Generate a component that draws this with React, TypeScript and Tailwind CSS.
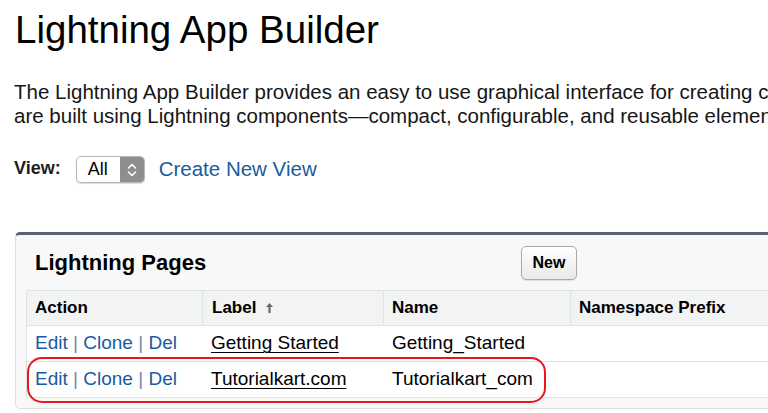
import React from "react";

function SortArrow() {
  return (
    <svg width="9" height="12" viewBox="0 0 9 12" className="ml-[9px]">
      <path d="M4.5 1 L8 5 L5.6 5 L5.6 11 L3.4 11 L3.4 5 L1 5 Z" fill="#6b6b6b" />
    </svg>
  );
}

function Chevrons() {
  return (
    <svg width="12" height="18" viewBox="0 0 12 18">
      <path d="M2.5 7 L6 3.5 L9.5 7" fill="none" stroke="#ffffff" strokeWidth="1.6" strokeLinecap="round" strokeLinejoin="round" />
      <path d="M2.5 11 L6 14.5 L9.5 11" fill="none" stroke="#ffffff" strokeWidth="1.6" strokeLinecap="round" strokeLinejoin="round" />
    </svg>
  );
}

function Actions() {
  return (
    <span className="text-[#1a5b9e] whitespace-nowrap">
      <span>Edit</span>
      <span className="text-[#6a88b0]"> | </span>
      <span>Clone</span>
      <span className="text-[#6a88b0]"> | </span>
      <span>Del</span>
    </span>
  );
}

const rows = [
  { label: "Getting Started", name: "Getting_Started" },
  { label: "Tutorialkart.com", name: "Tutorialkart_com" },
];

export default function App() {
  return (
    <div className="relative w-[768px] h-[413px] overflow-hidden bg-white text-black font-['Liberation_Sans','Helvetica',Arial,sans-serif]">
      <h1 className="pt-[8px] pl-[15px] text-[38.5px] leading-[44px] font-normal whitespace-nowrap">
        Lightning App Builder
      </h1>

      <div className="mt-[28px] pl-[14px] text-[20.5px] leading-[24px] whitespace-nowrap text-[#161616]">
        <div>
          The Lightning App Builder provides an easy to use graphical interface for creating custom pages for the Salesforce mobile app. Lightning pages
        </div>
        <div>
          are built using Lightning components—compact, configurable, and reusable elements that you can drag and drop
        </div>
      </div>

      <div className="mt-[28px] pl-[14px] flex items-center h-[27px]">
        <span className="text-[18px] font-bold text-[#1e1e1e] -mt-[2px]">View:</span>
        <div className="ml-[15px] flex h-[27px] w-[69px] rounded-[5px] border border-[#b9b9b9] shadow-[0_1px_1px_rgba(0,0,0,0.15)] overflow-hidden bg-white">
          <div className="flex-1 flex items-center pl-[11px] text-[18px]">All</div>
          <div className="w-[24px] bg-[#8e8e8e] flex items-center justify-center">
            <Chevrons />
          </div>
        </div>
        <span className="ml-[14px] text-[20.5px] text-[#1a5b9e] -mt-[1px]">Create New View</span>
      </div>

      <div className="mt-[49px] ml-[15px] w-[820px] rounded-[5px] border border-[#dedede] border-t-[3px] border-t-[#5b6272] bg-[#f8f8f8] pl-[10px] pb-[10px]">
        <div className="flex items-center h-[55px]">
          <div className="w-[495px] pl-[9px] text-[22px] font-bold">Lightning Pages</div>
          <div className="w-[56px] h-[34px] rounded-[5px] border border-[#a9a9a9] bg-gradient-to-b from-white to-[#e9e9e9] flex items-center justify-center text-[16px] font-bold shadow-[0_1px_1px_rgba(0,0,0,0.1)]">
            New
          </div>
        </div>

        <div className="border border-[#e0e3e5] border-b-0">
          <div className="grid grid-cols-[176px_181px_187px_300px] h-[35px] bg-[#f2f3f3] text-[17px] font-bold border-b border-[#e0e3e5]">
            <div className="flex items-center pl-[8px] border-r border-[#e0e3e5]">Action</div>
            <div className="flex items-center pl-[9px] border-r border-[#e0e3e5]">
              Label
              <SortArrow />
            </div>
            <div className="flex items-center pl-[8px] border-r border-[#e0e3e5]">Name</div>
            <div className="flex items-center pl-[8px]">Namespace Prefix</div>
          </div>
          {rows.map((r) => (
            <div
              key={r.name}
              className="grid grid-cols-[176px_181px_187px_300px] h-[36px] bg-white text-[19px] border-b border-[#e0e3e5]"
            >
              <div className="flex items-center pl-[8px]">
                <Actions />
              </div>
              <div className="flex items-center pl-[8px]">
                <span className="underline underline-offset-[3px] decoration-[1px]">{r.label}</span>
              </div>
              <div className="flex items-center pl-[8px]">{r.name}</div>
              <div />
            </div>
          ))}
        </div>
      </div>

      <div className="absolute left-[27px] top-[357px] w-[519px] h-[46px] rounded-[15px] border-2 border-[#e6171d] pointer-events-none" />
    </div>
  );
}
